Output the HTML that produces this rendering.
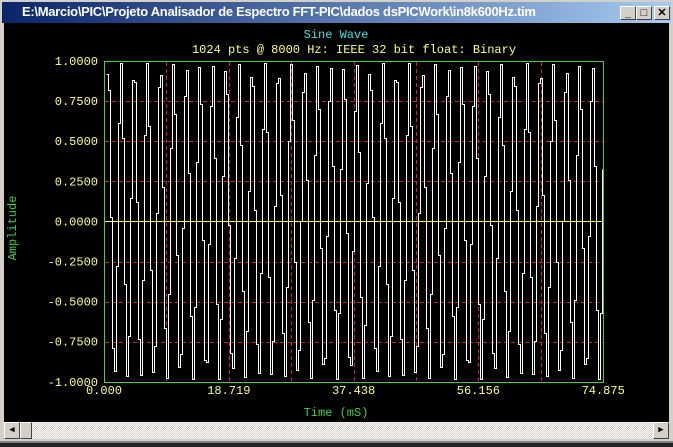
<!DOCTYPE html>
<html><head><meta charset="utf-8">
<style>
*{margin:0;padding:0;box-sizing:border-box}
body{width:673px;height:447px;background:#d4d0c8;position:relative;overflow:hidden;font-family:"Liberation Mono",monospace}
#title{position:absolute;left:0;top:0;width:673px;height:23px;background:linear-gradient(to right,#0a246a,#a6caf0);border:2px solid #d4d0c8;border-bottom:none}
#title span{position:absolute;left:20px;top:2px;color:#fff;font:bold 13px "Liberation Sans",sans-serif;letter-spacing:-0.3px}
.btn{position:absolute;top:4px;width:16px;height:14px;background:#d4d0c8;border:1px solid;border-color:#fff #404040 #404040 #fff;font:bold 11px "Liberation Sans",sans-serif;text-align:center;line-height:12px;color:#000}
#black{position:absolute;left:4px;top:23px;width:665px;height:399px;background:#000}
#sb{position:absolute;left:4px;top:422px;width:665px;height:17px;background:repeating-conic-gradient(#d4d0c8 0 25%,#fff 0 50%) 0 0/2px 2px}
.sbb{position:absolute;top:0;width:16px;height:17px;background:#d4d0c8;border:1px solid;border-color:#fff #404040 #404040 #fff}
#bot{position:absolute;left:0;top:441px;width:673px;height:6px;background:#222;border-top:2px solid #808080}
svg{position:absolute;left:0;top:0}
text{font-family:"Liberation Mono",monospace;font-size:12px}
</style></head><body>
<div id="title"><span>E:\Marcio\PIC\Projeto Analisador de Espectro FFT-PIC\dados dsPICWork\in8k600Hz.tim</span>
<div class="btn" style="left:618px">_</div><div class="btn" style="left:634px">□</div><div class="btn" style="left:652px">✕</div></div>
<div id="black"></div>
<div id="sb"><div class="sbb" style="left:0;font-size:9px;line-height:15px;text-align:center">◀</div><div class="sbb" style="left:16px;width:12px"></div><div class="sbb" style="right:0;font-size:9px;line-height:15px;text-align:center">▶</div></div>
<div id="bot"></div>
<svg width="673" height="447" id="s">
<text x="336" y="38" fill="#40e0e0" text-anchor="middle">Sine Wave</text>
<text x="354" y="53" fill="#ffff80" text-anchor="middle">1024 pts @ 8000 Hz: IEEE 32 bit float: Binary</text>
<g id="grid" shape-rendering="crispEdges"></g>
<polyline id="wave" fill="none" stroke="#fff" stroke-width="1" shape-rendering="crispEdges"/>
<line x1="104" y1="221.5" x2="603" y2="221.5" stroke="#ffff60" shape-rendering="crispEdges"/>
<rect x="104.5" y="61.5" width="499" height="321" fill="none" stroke="#40d040" shape-rendering="crispEdges"/>
<g id="lab" fill="#ffff80"></g>
<text x="336" y="416" fill="#40d040" text-anchor="middle">Time (mS)</text>
<text transform="translate(16,228) rotate(-90)" fill="#40d040" text-anchor="middle">Amplitude</text>
</svg>
<script>
var ns="http://www.w3.org/2000/svg",g=document.getElementById("grid"),lab=document.getElementById("lab");
function el(t,a,p){var e=document.createElementNS(ns,t);for(var k in a)e.setAttribute(k,a[k]);p.appendChild(e);return e}
for(var i=1;i<8;i++){var x=Math.round(104+i*62.4)+0.5;el("line",{x1:x,y1:62,x2:x,y2:382,stroke:"#d02020","stroke-dasharray":"4,3"},g);}
for(var i=1;i<8;i++){if(i==4)continue;var y=Math.round(61+i*40.1)+0.5;el("line",{x1:105,y1:y,x2:603,y2:y,stroke:"#d02020","stroke-dasharray":"4,3"},g);}
var yl=["1.0000","0.7500","0.5000","0.2500","0.0000","-0.2500","-0.5000","-0.7500","-1.0000"];
for(var i=0;i<9;i++){el("text",{x:98,y:65+i*40.1,"text-anchor":"end"},lab).textContent=yl[i];}
var xl=["0.000","18.719","37.438","56.156","74.875"];
for(var i=0;i<5;i++){el("text",{x:104+i*124.8,y:394,"text-anchor":"middle"},lab).textContent=xl[i];}
var pts=[],py=null;for(var k=0;k<=497;k+=2){var x=106+k+0.5,v=Math.sin(2*Math.PI*k/13.1+1.2),y=Math.round(221-v*158)+0.5;if(py!==null)pts.push(x+","+py);pts.push(x+","+y);py=y;}
document.getElementById("wave").setAttribute("points",pts.join(" "));
</script>
</body></html>
